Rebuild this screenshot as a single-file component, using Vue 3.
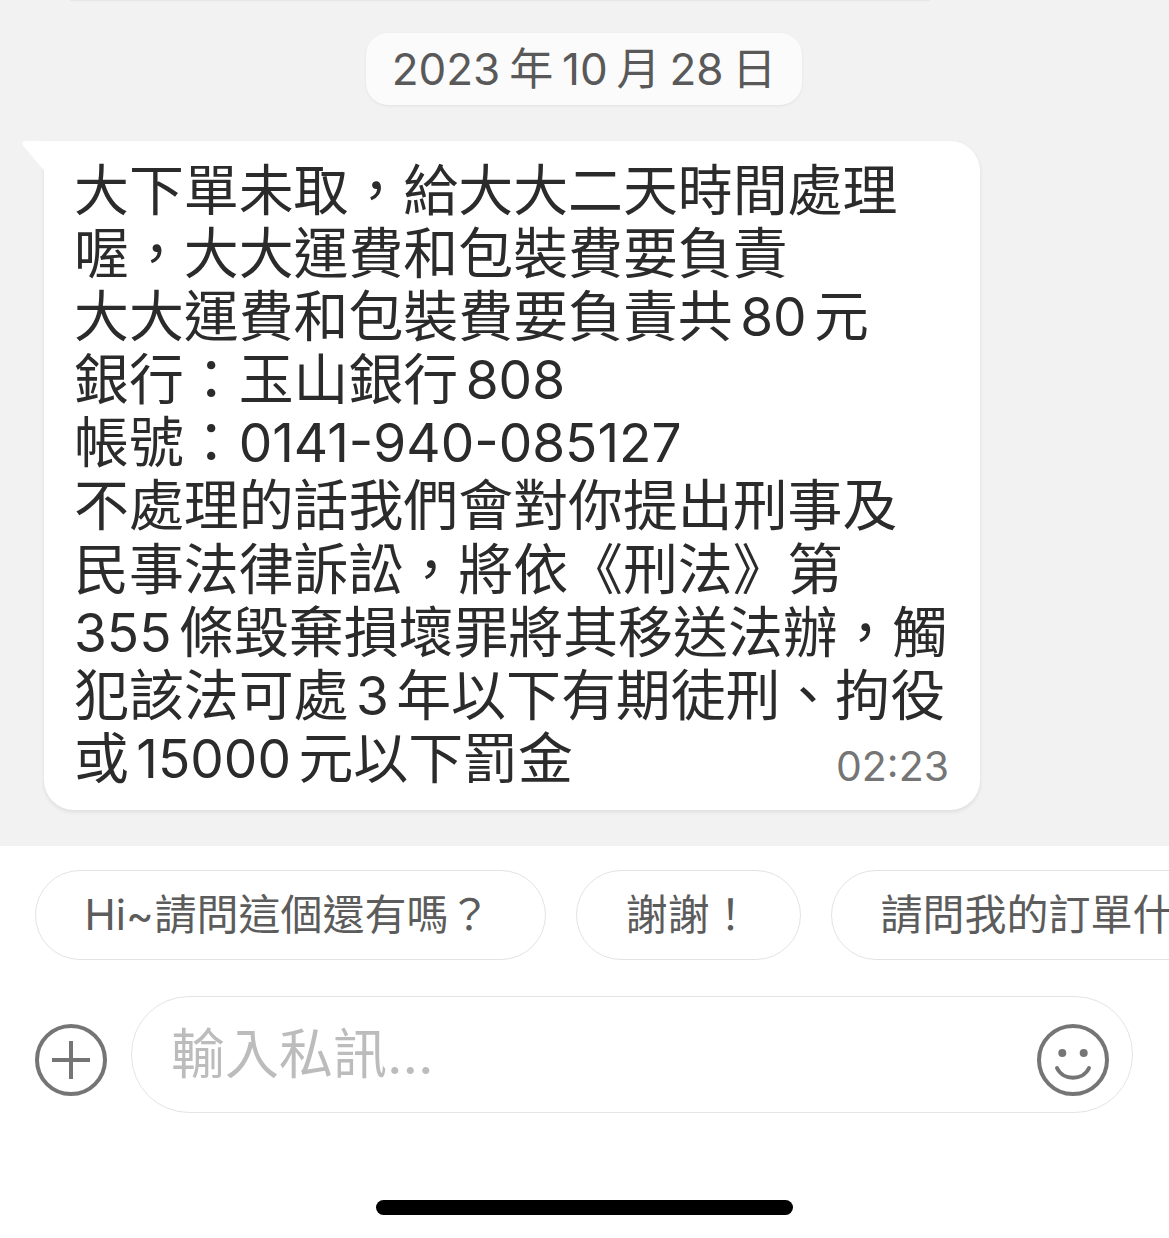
<script setup>
const lines = [
  '大下單未取，給大大二天時間處理',
  '喔，大大運費和包裝費要負責',
  '大大運費和包裝費要負責共 80 元',
  '銀行：玉山銀行 808',
  '帳號：0141-940-085127',
  '不處理的話我們會對你提出刑事及',
  '民事法律訴訟，將依《刑法》第',
  '355 條毀棄損壞罪將其移送法辦，觸',
  '犯該法可處 3 年以下有期徒刑、拘役',
  '或 15000 元以下罰金'
]

// numbers are set a little smaller than the CJK text around them
const rows = lines.map((text) =>
  text.split(/([0-9][0-9-]*)/).map((part) => ({ part, num: /^[0-9]/.test(part) }))
)

const chips = ['Hi~ 請問這個還有嗎？', '謝謝！', '請問我的訂單什']
</script>

<template>
  <div class="screen">
    <section class="chat">
      <div class="top-edge"></div>
      <div class="date-pill">2023 年 10 月 28 日</div>
      <div class="bubble">
        <svg class="tail" width="24" height="32" viewBox="0 0 24 32">
          <path d="M24 0H4C0.5 0 -0.5 2.5 1.5 5L24 32Z" fill="#fff" />
        </svg>
        <div v-for="(row, i) in rows" :key="i" class="line">
          <span v-for="(seg, j) in row" :key="j" :class="{ num: seg.num }">{{ seg.part }}</span>
        </div>
        <span class="time">02:23</span>
      </div>
    </section>

    <section class="footer">
      <div class="chips">
        <div v-for="chip in chips" :key="chip" class="chip">{{ chip }}</div>
      </div>
      <div class="composer">
        <svg class="icon" width="74" height="74" viewBox="0 0 74 74">
          <circle cx="37" cy="37" r="34" fill="none" stroke="#757575" stroke-width="4" />
          <path d="M18 37H56M37 18V56" fill="none" stroke="#757575" stroke-width="4" />
        </svg>
        <div class="input">
          <span class="placeholder">輸入私訊...</span>
          <svg class="icon" width="74" height="74" viewBox="0 0 74 74">
            <circle cx="37" cy="37" r="34" fill="none" stroke="#757575" stroke-width="4" />
            <circle cx="26.3" cy="30" r="4" fill="#757575" />
            <circle cx="47.7" cy="30" r="4" fill="#757575" />
            <path d="M21 45C27 58 47 58 53 45" fill="none" stroke="#757575" stroke-width="4" stroke-linecap="round" />
          </svg>
        </div>
      </div>
      <div class="home-bar"></div>
    </section>
  </div>
</template>

<style>
html, body {
  margin: 0;
  background: #fff;
}
</style>

<style scoped>
.screen {
  width: 1169px;
  height: 1238px;
  overflow: hidden;
  display: flex;
  flex-direction: column;
  font-family: Inter, "Noto Sans CJK TC", sans-serif;
  background: #fff;
}

.chat {
  position: relative;
  height: 846px;
  box-sizing: border-box;
  padding-top: 33px;
  background: #f2f2f2;
  display: flex;
  flex-direction: column;
}

.top-edge {
  position: absolute;
  top: -3px;
  left: 70px;
  width: 860px;
  height: 3px;
  box-shadow: 0 1px 2px rgba(0, 0, 0, 0.06);
}

.date-pill {
  align-self: center;
  width: 436px;
  height: 72px;
  margin-left: -1px;
  border-radius: 22px;
  background: #fbfbfb;
  box-shadow: 0 1px 3px rgba(0, 0, 0, 0.07);
  color: #595959;
  font-size: 44px;
  line-height: 72px;
  text-align: center;
  white-space: nowrap;
  word-spacing: -3.5px;
}

.bubble {
  position: relative;
  width: 936px;
  height: 669px;
  box-sizing: border-box;
  margin: 36px 0 0 44px;
  padding: 18px 0 0 30px;
  border-radius: 0 30px 30px 30px;
  background: #fff;
  box-shadow: 0 2px 4px rgba(0, 0, 0, 0.09);
  color: #2b2b2b;
}

.tail {
  position: absolute;
  top: 0;
  left: -22px;
}

.line {
  height: 63.1px;
  font-size: 54.9px;
  line-height: 63.1px;
  white-space: nowrap;
  word-spacing: -8px;
}

.num {
  font-size: 53.2px;
}

.time {
  position: absolute;
  right: 31px;
  bottom: 20px;
  color: #757575;
  font-size: 41px;
  line-height: 48px;
}

.footer {
  flex: 1;
  position: relative;
  overflow: hidden;
}

.chips {
  display: flex;
  gap: 30px;
  margin: 24px 0 0 35px;
}

.chip {
  flex: none;
  height: 90px;
  box-sizing: border-box;
  padding: 0 48.5px;
  border: 1px solid #e3e3e3;
  border-radius: 45px;
  color: #5c5c5c;
  font-size: 42px;
  line-height: 88px;
  white-space: nowrap;
  word-spacing: -11px;
}

.chip:first-child {
  padding-right: 54.5px;
}

.composer {
  display: flex;
  align-items: center;
  gap: 23px;
  margin: 36px 36px 0 34px;
}

.icon {
  flex: none;
  margin-top: 10px;
}

.input {
  flex: 1;
  height: 117px;
  box-sizing: border-box;
  padding: 0 22px 0 39px;
  border: 1px solid #e4e4e4;
  border-radius: 58px;
  display: flex;
  align-items: center;
  justify-content: space-between;
}

.placeholder {
  color: #bcbcbc;
  font-size: 54px;
  line-height: 58px;
}

.home-bar {
  position: absolute;
  top: 354px;
  left: 376px;
  width: 417px;
  height: 15px;
  border-radius: 8px;
  background: #000;
}
</style>
